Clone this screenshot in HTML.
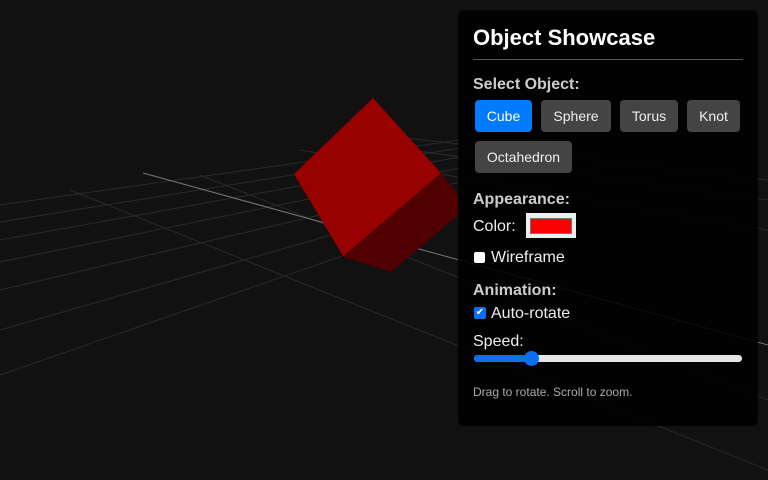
<!DOCTYPE html><html><head><style>
body{margin:0;width:768px;height:480px;background:#111;overflow:hidden;font-family:"Liberation Sans",sans-serif;position:relative}
svg{position:absolute;left:0;top:0}
#p{position:absolute;left:458px;top:10px;width:300px;height:416px;background:rgba(0,0,0,0.88);border-radius:6px;color:#fff}
.a{position:absolute;white-space:nowrap}
h1{position:absolute;left:15px;top:15px;margin:0;font-size:22px;font-weight:bold}
.hr{position:absolute;left:15px;top:49px;width:270px;height:1px;background:#555}
.l{font-weight:bold;font-size:16px;color:#ccc}
.b{position:absolute;height:32px;line-height:32px;background:#444;border-radius:4px;font-size:14px;color:#eee;text-align:center}
.t{font-size:16px;color:#eee}
.cb{position:absolute;width:11px;height:11px;border-radius:2px;background:#fff}
</style></head><body>
<svg width="768" height="480">
<g stroke="#2a2a2a" stroke-width="1">
<line x1="0" y1="205" x2="460" y2="140"/><line x1="0" y1="222" x2="460" y2="148"/>
<line x1="0" y1="240" x2="460" y2="157"/><line x1="0" y1="262" x2="460" y2="168"/>
<line x1="0" y1="290" x2="460" y2="182"/><line x1="0" y1="330" x2="460" y2="198"/>
<line x1="0" y1="375" x2="460" y2="215"/>
<line x1="70" y1="190" x2="768" y2="470"/><line x1="200" y1="175" x2="768" y2="400"/>
<line x1="300" y1="150" x2="768" y2="230"/><line x1="340" y1="140" x2="768" y2="200"/>
<line x1="380" y1="135" x2="768" y2="180"/>
</g>
<line x1="143" y1="173" x2="768" y2="345" stroke="#777" stroke-width="1"/>
<polygon points="341,256 391,272 458,215 458,195 441,173" fill="#500000"/>
<polygon points="373,98 441,173 343,256 294,174" fill="#990000"/>
</svg>
<div id="p">
<h1>Object Showcase</h1><div class="hr"></div>
<div class="a l" style="left:15px;top:66px">Select Object:</div>
<div class="b" style="left:17px;top:90px;width:57px;background:#007bff;color:#fff">Cube</div>
<div class="b" style="left:83px;top:90px;width:70px">Sphere</div>
<div class="b" style="left:162px;top:90px;width:58px">Torus</div>
<div class="b" style="left:229px;top:90px;width:53px">Knot</div>
<div class="b" style="left:17px;top:131px;width:97px">Octahedron</div>
<div class="a l" style="left:15px;top:181px">Appearance:</div>
<div class="a t" style="left:15px;top:208px">Color:</div>
<div class="a" style="left:68px;top:203px;width:50px;height:25px;background:#eee"><div style="position:absolute;left:4px;top:5px;width:40px;height:14px;background:#f00;border:1px solid #777"></div></div>
<div class="cb" style="left:16px;top:242px"></div>
<div class="a t" style="left:33px;top:239px">Wireframe</div>
<div class="a l" style="left:15px;top:272px">Animation:</div>
<div class="cb" style="left:16px;top:297px;background:#0a6ff0;width:12px;height:12px;color:#fff;font-size:10px;line-height:12px;text-align:center">✔</div>
<div class="a t" style="left:33px;top:295px">Auto-rotate</div>
<div class="a t" style="left:15px;top:323px">Speed:</div>
<div class="a" style="left:16px;top:345px;width:268px;height:7px;border-radius:4px;background:#e6e6e6"></div>
<div class="a" style="left:16px;top:345px;width:60px;height:7px;border-radius:4px;background:#0a6ff0"></div>
<div class="a" style="left:66px;top:341px;width:15px;height:15px;border-radius:50%;background:#0a6ff0"></div>
<div class="a" style="left:15px;top:375px;font-size:12px;color:#aaa">Drag to rotate. Scroll to zoom.</div>
</div>
</body></html>
